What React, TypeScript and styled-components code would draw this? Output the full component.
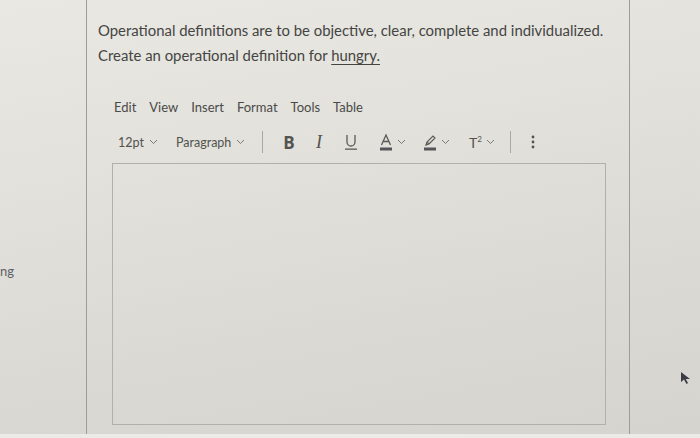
import React from 'react';
import styled, { createGlobalStyle } from 'styled-components';

const GlobalStyle = createGlobalStyle`
  html, body {
    margin: 0;
    padding: 0;
    width: 700px;
    height: 438px;
    overflow: hidden;
  }
  body {
    font-family: Lato, "Open Sans", sans-serif;
    color: #4b4b49;
  }
`;

const Page = styled.div`
  position: relative;
  display: flex;
  width: 700px;
  height: 438px;
  background: linear-gradient(170deg, #e9e8e3 0%, #e2e1dc 35%, #d9d8d3 75%, #d5d4cf 100%);
`;

const Side = styled.div`
  width: 86px;
  padding-top: 263px;
  box-sizing: border-box;
  overflow: hidden;
`;

const SideText = styled.span`
  display: block;
  font-size: 13px;
  color: #5e5e6a;
`;

const Panel = styled.div`
  width: 544px;
  border-left: 1px solid #9c9c98;
  border-right: 1px solid #9c9c98;
  padding: 18px 0 0 11px;
  box-sizing: border-box;
`;

const Question = styled.p`
  margin: 0;
  font-size: 14.9px;
  line-height: 25px;
  color: #444442;
`;

const Term = styled.span`
  text-decoration: underline;
  text-underline-offset: 3px;
  text-decoration-thickness: 1px;
`;

const MenuBar = styled.div`
  display: flex;
  gap: 13px;
  margin: 30px 0 0 16px;
  font-size: 13px;
  line-height: 18px;
  color: #4a4a48;
`;

const ToolBar = styled.div`
  display: flex;
  align-items: center;
  height: 24px;
  margin: 14px 0 0 20px;
  font-size: 12.5px;
  color: #52524e;
`;

const Select = styled.span<{ $w: number }>`
  display: inline-flex;
  align-items: center;
  gap: 5px;
  width: ${(p) => p.$w}px;
`;

const Divider = styled.span<{ $l: number; $r: number }>`
  width: 1px;
  height: 22px;
  background: #a9a9a4;
  margin: 0 ${(p) => p.$r}px 0 ${(p) => p.$l}px;
`;

const Tool = styled.span<{ $w: number; $pad?: number }>`
  display: inline-flex;
  align-items: center;
  justify-content: ${(p) => (p.$pad === undefined ? 'center' : 'flex-start')};
  gap: 4px;
  width: ${(p) => p.$w}px;
  padding-left: ${(p) => p.$pad ?? 0}px;
  box-sizing: border-box;
  color: #53534f;
`;

const Bold = styled.span`
  font-family: "Open Sans", sans-serif;
  font-weight: 700;
  font-size: 17px;
`;

const Italic = styled.span`
  font-family: "Liberation Serif", serif;
  font-style: italic;
  font-size: 18px;
`;

const Super = styled.span`
  font-size: 14px;
`;

const Sup = styled.sup`
  font-size: 8px;
`;

const Editor = styled.div`
  margin: 9px 0 0 14px;
  width: 494px;
  height: 262px;
  border: 1px solid #b1b1ac;
  box-sizing: border-box;
`;

const BottomEdge = styled.div`
  position: absolute;
  left: 0;
  right: 0;
  bottom: 0;
  height: 4px;
  background: #ecebe7;
`;

const Cursor = styled.svg`
  position: absolute;
  left: 680px;
  top: 371px;
`;

const Chevron = () => (
  <svg width="9" height="6" viewBox="0 0 9 6">
    <path d="M1 1 L4.5 4.5 L8 1" fill="none" stroke="#7a7a76" strokeWidth="1" />
  </svg>
);

const menu = ['Edit', 'View', 'Insert', 'Format', 'Tools', 'Table'];

export default function App() {
  return (
    <>
      <GlobalStyle />
      <Page>
        <Side>
          <SideText>ng</SideText>
        </Side>
        <Panel>
          <Question>
            Operational definitions are to be objective, clear, complete and individualized.
            <br />
            Create an operational definition for <Term>hungry.</Term>
          </Question>
          <MenuBar>
            {menu.map((m) => (
              <span key={m}>{m}</span>
            ))}
          </MenuBar>
          <ToolBar>
            <Select $w={58}>
              12pt <Chevron />
            </Select>
            <Select $w={76}>
              Paragraph <Chevron />
            </Select>
            <Divider $l={10} $r={12} />
            <Tool $w={28}>
              <Bold>B</Bold>
            </Tool>
            <Tool $w={32}>
              <Italic>I</Italic>
            </Tool>
            <Tool $w={32}>
              <svg width="14" height="18" viewBox="0 0 14 18">
                <path d="M3 2 V9 a4 4 0 0 0 8 0 V2" fill="none" stroke="#5a5a56" strokeWidth="1.3" />
                <rect x="1" y="15.5" width="12" height="1.3" fill="#5a5a56" />
              </svg>
            </Tool>
            <Tool $w={48} $pad={12}>
              <svg width="14" height="18" viewBox="0 0 14 18">
                <path d="M2.5 12 L7 2 L11.5 12 M4.2 8.5 H9.8" fill="none" stroke="#5a5a56" strokeWidth="1.3" />
                <rect x="1" y="14.5" width="12" height="3" fill="#55555a" />
              </svg>
              <Chevron />
            </Tool>
            <Tool $w={48} $pad={8}>
              <svg width="14" height="18" viewBox="0 0 14 18">
                <path d="M3 12 L4 9 L10 3 L12 5 L6 11 Z M4 9 L6 11" fill="none" stroke="#5a5a56" strokeWidth="1.2" />
                <rect x="1" y="14.5" width="12" height="3" fill="#55555a" />
              </svg>
              <Chevron />
            </Tool>
            <Tool $w={40} $pad={6}>
              <Super>
                T<Sup>2</Sup>
              </Super>
              <Chevron />
            </Tool>
            <Divider $l={7} $r={18} />
            <Tool $w={8}>
              <svg width="4" height="14" viewBox="0 0 4 14">
                <circle cx="2" cy="2" r="1.4" fill="#55554f" />
                <circle cx="2" cy="7" r="1.4" fill="#55554f" />
                <circle cx="2" cy="12" r="1.4" fill="#55554f" />
              </svg>
            </Tool>
          </ToolBar>
          <Editor />
        </Panel>
        <Cursor width="12" height="14" viewBox="0 0 12 14">
          <path d="M1 1 L1 11 L4 8.5 L6.5 13 L8 12 L5.8 8 L10 8 Z" fill="#3c3c46" />
        </Cursor>
        <BottomEdge />
      </Page>
    </>
  );
}
